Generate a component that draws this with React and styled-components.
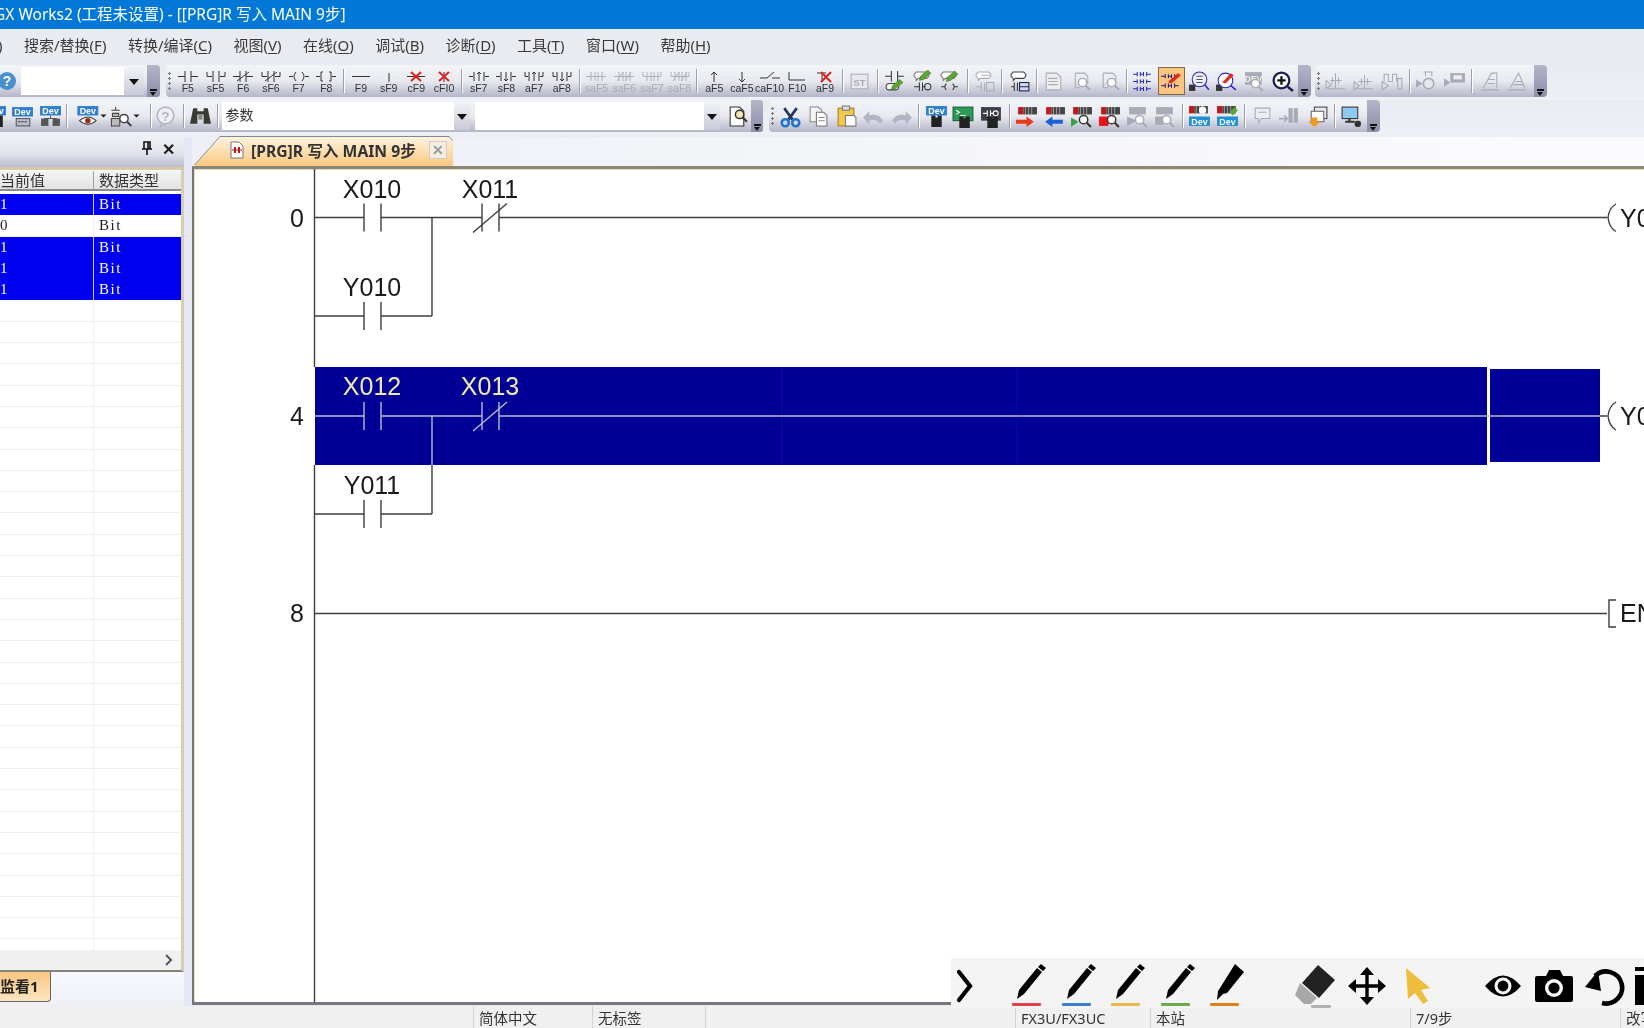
import React from "react"
import styled, { createGlobalStyle, css } from "styled-components"

const GlobalStyle = createGlobalStyle`
  html, body {
    margin: 0;
    padding: 0;
    background: #f0f0f0;
    overflow: hidden;
  }
  * { box-sizing: border-box; }
`

const UI_FONT = `"Noto Sans", "Noto Sans CJK SC", sans-serif`

const Screen = styled.div`
  position: relative;
  width: 1644px;
  height: 1028px;
  overflow: hidden;
  display: flex;
  flex-direction: column;
  font-family: ${UI_FONT};
  background: #eceef4;
  filter: blur(0.3px);
`

const TitleBar = styled.div`
  height: 29px;
  flex: none;
  background: #0078d7;
  color: #fff;
  font-size: 15.5px;
  line-height: 28px;
  white-space: nowrap;
  margin-left: -6px;
`

const MenuBar = styled.div`
  height: 36px;
  flex: none;
  display: flex;
  align-items: center;
  gap: 21.5px;
  margin-left: -2px;
  padding-bottom: 5px;
  background: #e9ebf1;
  color: #3a3a3a;
  font-size: 15px;
  white-space: nowrap;
`

const MenuItem = styled.span`
  u { text-underline-offset: 2px; }
`

const ToolRow = styled.div`
  height: 35px;
  flex: none;
  display: flex;
  align-items: flex-start;
  gap: 4px;
  background: linear-gradient(#e9ebf1, #eff0f5);
`

const ToolBar = styled.div`
  height: 32px;
  display: flex;
  align-items: center;
  flex: none;
  width: ${p => p.$w}px;
  margin-left: ${p => p.$offset ?? 0}px;
  background: linear-gradient(#f3f4f8 0%, #e9eaf0 50%, #b4b5c9 100%);
  border-radius: ${p => (p.$flushLeft ? "0 3px 3px 0" : "4px")};
  overflow: hidden;
`

const ToolEnd = styled.div`
  width: 13px;
  flex: none;
  align-self: stretch;
  margin-left: auto;
  border-radius: 0 3px 3px 0;
  background: linear-gradient(#b4b5c8, #8d8ea8);
  position: relative;
  &::after {
    content: "";
    position: absolute;
    left: 3px;
    bottom: 6px;
    width: 7px;
    height: 2px;
    background: #111;
  }
  &::before {
    content: "";
    position: absolute;
    left: 3px;
    bottom: 1px;
    border: 3.5px solid transparent;
    border-top: 4px solid #111;
    border-bottom: 0;
  }
`

const Grip = styled.div`
  width: 3px;
  height: 20px;
  margin: 0 3px 0 2px;
  flex: none;
  background-image: radial-gradient(circle, #777 1px, transparent 1.2px);
  background-size: 3px 5px;
`

const Sep = styled.div`
  width: 1px;
  height: 24px;
  margin: 0 ${p => p.$r ?? 3}px 0 ${p => p.$l ?? 3}px;
  flex: none;
  background: #9c9db2;
  box-shadow: 1px 0 0 #fff;
`

const ToolBtn = styled.div`
  width: ${p => p.$w ?? 27.7}px;
  height: 28px;
  flex: none;
  margin-left: ${p => p.$ml ?? 0}px;
  display: flex;
  flex-direction: column;
  align-items: center;
  justify-content: center;
  color: #222;
  ${p =>
    p.$active &&
    css`
      background: #fbc580;
      outline: 1px solid #7d6a48;
      outline-offset: -1px;
    `}
`

const KeyLabel = styled.span`
  font: 10.5px/10px "Liberation Sans", sans-serif;
  color: ${p => (p.$dim ? "#a9a9b4" : "#333")};
  white-space: nowrap;
`

const Combo = styled.div`
  position: relative;
  height: 28px;
  width: ${p => p.$w}px;
  margin-left: ${p => p.$ml ?? 0}px;
  flex: none;
  background: #fff;
  color: #333;
  font-size: 14px;
  line-height: 26px;
  padding-left: 4px;
`

const ComboArrow = styled.div`
  position: absolute;
  right: 0;
  top: 0;
  bottom: 0;
  width: ${p => p.$w ?? 16}px;
  background: linear-gradient(#f2f3f6, #c9cad8);
  &::after {
    content: "";
    position: absolute;
    left: calc(50% - 5px);
    top: 12px;
    border: 5px solid transparent;
    border-top: 6px solid #111;
    border-bottom: 0;
  }
`

const Workspace = styled.div`
  flex: 1;
  min-height: 0;
  display: flex;
  margin-top: 2px;
  background: linear-gradient(90deg, #e4e7f4, #eceef6);
`

const SidePanel = styled.div`
  width: 184px;
  flex: none;
  display: flex;
  flex-direction: column;
`

const PanelHead = styled.div`
  height: 30px;
  flex: none;
  display: flex;
  justify-content: flex-end;
  align-items: center;
  gap: 9px;
  padding: 0 9px 5px 0;
  background: linear-gradient(#eff0f5, #e0e1ea 60%, #babbce);
  font: bold 16px/1 "Liberation Sans", sans-serif;
  color: #222;
`

const PanelBody = styled.div`
  flex: 1;
  min-height: 0;
  display: flex;
  flex-direction: column;
  border-top: 3px solid #d8c9a6;
  border-right: 3px solid #d8cdb4;
  border-bottom: 2px solid #85857f;
  background: #fff;
`

const WatchTable = styled.div`
  flex: 1;
  min-height: 0;
  overflow: hidden;
  padding-top: 1px;
`

const WatchHead = styled.div`
  display: grid;
  grid-template-columns: 93px 88px;
  height: 20px;
  margin-bottom: 3px;
  background: linear-gradient(#f4f4f4, #e3e3e3);
  border-bottom: 2px solid #8d8d8d;
  font-size: 15px;
  line-height: 19px;
  color: #333;
  span + span {
    border-left: 1px solid #a0a0a0;
    padding-left: 5px;
  }
`

const WatchRow = styled.div`
  display: grid;
  grid-template-columns: 93px 88px;
  height: 21.3px;
  font: 15px/21px "Liberation Serif", serif;
  letter-spacing: 1.6px;
  color: ${p => (p.$on ? "#fff" : "#222")};
  span {
    background: ${p => (p.$on ? "#0000f0" : "#fff")};
    border-bottom: 1px solid ${p => (p.$on ? "#c8c8f0" : "#efefef")};
  }
  span + span {
    border-left: 1px solid ${p => (p.$on ? "#c8c8f0" : "#efefef")};
    padding-left: 5px;
  }
`

const HScroll = styled.div`
  height: 20px;
  flex: none;
  display: flex;
  align-items: center;
  justify-content: flex-end;
  padding-right: 8px;
  background: #f0f0f0;
`

const SheetTabs = styled.div`
  height: 34px;
  flex: none;
  background: linear-gradient(#f8f9fe, #eef0f6);
`

const SheetTab = styled.div`
  width: 51px;
  height: 30px;
  padding-right: 13px;
  text-align: right;
  font-size: 15px;
  font-weight: 700;
  line-height: 28px;
  color: #222;
  background: linear-gradient(#fcc581, #fde6c2);
  border-right: 1px solid #666;
  border-bottom: 1px solid #666;
  border-radius: 0 0 4px 0;
  white-space: nowrap;
  overflow: hidden;
`

const EditorArea = styled.div`
  flex: 1;
  min-width: 0;
  display: flex;
  flex-direction: column;
  padding-left: 8px;
  padding-bottom: 1px;
`

const TabStrip = styled.div`
  height: 29px;
  flex: none;
  padding-left: 2px;
  display: flex;
  align-items: flex-end;
  background: linear-gradient(90deg, #eef0f6, #fbfbfd);
`

const DocTabOutline = styled.div`
  filter: drop-shadow(0 -1px 0 #7f8798);
`

const DocTab = styled.div`
  width: 259px;
  height: 29px;
  display: flex;
  align-items: center;
  padding: 0 0 3px 35px;
  gap: 6px;
  font-size: 15.7px;
  font-weight: 700;
  color: #333;
  white-space: nowrap;
  background: linear-gradient(#fdf3df, #fbc880);
  clip-path: polygon(0 100%, 26px 0, calc(100% - 4px) 0, 100% 4px, 100% 100%);
`

const TabClose = styled.div`
  width: 18px;
  height: 18px;
  margin-left: auto;
  margin-right: 6px;
  background: #f3eee4;
  border: 1px solid #d2cdc2;
  color: #9a9a9a;
  font: bold 14px/16px "Liberation Sans", sans-serif;
  text-align: center;
`

const EditorFrame = styled.div`
  flex: 1;
  min-height: 0;
  background: #fff;
  overflow: hidden;
  border-top: 3px solid #8b8778;
  border-left: 2px solid #77756e;
  box-shadow: inset 1px 1px 0 #e8dcc2;
  border-bottom: 3px solid #77787e;
`

const Ladder = styled.svg`
  display: block;
`

const LadderText = styled.text`
  font-family: "Liberation Sans", sans-serif;
  font-size: ${p => p.$size ?? 25}px;
  text-anchor: ${p => p.$anchor ?? "middle"};
  fill: ${p => (p.$sel ? "#efe9ad" : "#1a1a1a")};
`

const StatusBar = styled.div`
  height: 22px;
  flex: none;
  display: flex;
  background: #f0f0f0;
  color: #333;
  font-size: 14.5px;
  line-height: 24px;
  white-space: nowrap;
`

const StatusCell = styled.div`
  width: ${p => p.$w}px;
  flex: none;
  padding-left: 5px;
  border-left: ${p => (p.$first ? "none" : "1px solid #d2d2d2")};
`

const PenDock = styled.div`
  position: absolute;
  left: 951px;
  top: 958px;
  width: 693px;
  height: 50px;
  padding-top: 6px;
  display: flex;
  align-items: center;
  background: #f4f4f4;
`

const DockSlot = styled.div`
  width: ${p => p.$w}px;
  flex: none;
  display: flex;
  justify-content: center;
  margin-right: ${p => p.$mr ?? 0}px;
`

// ---------- toolbar glyphs ----------

const K = ({ d, red, dim, label }) => (
  <ToolBtn>
    <svg width="24" height="13" viewBox="0 0 24 13" fill="none" stroke={dim ? "#b0b0ba" : "#333"} strokeWidth="1">
      <path d={d} />
      {red && <path d={red} stroke="#e02020" strokeWidth="2" />}
    </svg>
    <KeyLabel $dim={dim}>{label}</KeyLabel>
  </ToolBtn>
)

const G = ({ active, ml, children }) => (
  <ToolBtn $active={active} $ml={ml}>
    <svg width="23" height="23" viewBox="0 0 22 22" fill="none">
      {children}
    </svg>
  </ToolBtn>
)

const Mag = ({ x = 12, y = 12, c = "#666", f = "#fff" }) => (
  <g stroke={c}>
    <circle cx={x} cy={y} r="4" fill={f} strokeWidth="1.4" />
    <path d={`M${x + 3} ${y + 3}l4 4`} strokeWidth="2" />
  </g>
)
const Pen = ({ x = 12, y = 8 }) => (
  <path d={`M${x} ${y + 6}l7-6 3 3-7 6-4 1z`} fill="#5aa832" stroke="#386b1c" strokeWidth=".5" />
)
const Bubble = ({ x = 6, y = 2, c = "#777" }) => (
  <path d={`M${x} ${y}h10l2 2v2l-2 2h-8l-2 2v-2l-2-2v-2z`} fill="#fff" stroke={c} />
)
const DevTag = ({ x = 1, y = 1, c = "#2f7fd0" }) => (
  <g>
    <rect x={x} y={y} width="20" height="9" fill={c} />
    <text x={x + 10} y={y + 8} fontSize="8.5" fontWeight="700" fontFamily="Liberation Sans" fill="#fff" textAnchor="middle">Dev</text>
  </g>
)
const Binocular = ({ x = 8, y = 10 }) => (
  <path d={`M${x} ${y}h4v2h2v-2h4v11h-5v-4h-0v4h-5z`} fill="#222" />
)
const Blocks = ({ x = 1, y = 3, c = "#444" }) => (
  <g>
    <rect x={x} y={y} width="5" height="7" fill="#c01818" />
    <rect x={x + 5} y={y} width="13" height="7" fill={c} />
    <path d={`M${x + 7} ${y}v7M${x + 10} ${y}v7M${x + 13} ${y}v7`} stroke="#bbb" strokeWidth=".7" />
  </g>
)

const CONTACT = "M2 6.5h7M9 1v11M15 1v11M15 6.5h7"

const MAIN_KEYS = [
  { label: "F5", d: CONTACT },
  { label: "sF5", d: "M3 2v4.5h5M9 1v11M15 1v11M16 6.5h5V2" },
  { label: "F6", d: CONTACT + "M6 11L18 2" },
  { label: "sF6", d: "M3 2v4.5h5M9 1v11M15 1v11M16 6.5h5V2M6 11L18 2" },
  { label: "F7", d: "M2 6.5h4M9 2Q5 6.5 9 11M15 2Q19 6.5 15 11M18 6.5h4" },
  { label: "F8", d: "M2 6.5h4M9 2H7v9h2M15 2h2v9h-2M18 6.5h4" },
]
const LINE_KEYS = [
  { label: "F9", d: "M3 6.5h18" },
  { label: "sF9", d: "M12 3v9" },
  { label: "cF9", d: "M3 6.5h18", red: "M7 2l10 9M17 2L7 11" },
  { label: "cFI0", d: "M12 2v10", red: "M7 2l10 9M17 2L7 11" },
]
const PULSE_KEYS = [
  { label: "sF7", d: "M2 6.5h4M7 2v9M17 2v9M18 6.5h4M12 11V2M10 4l2-2 2 2" },
  { label: "sF8", d: "M2 6.5h4M7 2v9M17 2v9M18 6.5h4M12 11V2M10 9l2 2 2-2" },
  { label: "aF7", d: "M3 2v4.5h3M7 2v9M17 2v9M18 6.5h3V2M12 11V2M10 4l2-2 2 2" },
  { label: "aF8", d: "M3 2v4.5h3M7 2v9M17 2v9M18 6.5h3V2M12 11V2M10 9l2 2 2-2" },
]
const DIM_KEYS = [
  { label: "saF5", d: "M2 6.5h20M7 2v9M11 2v9M14 2v9M18 2v9", dim: true },
  { label: "saF6", d: "M2 6.5h20M7 2v9M11 2v9M14 2v9M18 2v9M5 11l6-9M13 11l6-9", dim: true },
  { label: "saF7", d: "M3 2v4.5h18V2M7 2v9M11 2v9M14 2v9M18 2v9", dim: true },
  { label: "saF8", d: "M3 2v4.5h18V2M7 2v9M11 2v9M14 2v9M18 2v9M5 11l6-9M13 11l6-9", dim: true },
]
const WIRE_KEYS = [
  { label: "aF5", d: "M12 12V2M9 5l3-3 3 3" },
  { label: "caF5", d: "M12 12V2M9 9l3 3 3-3" },
  { label: "caF10", d: "M2 8h7l7-6M14 8h8" },
  { label: "F10", d: "M4 2v8h16" },
  { label: "aF9", d: "M4 3h9M9 3v9", red: "M8 2l10 10M18 2L8 12" },
]

const D = "#a9aab6"

const Row1Toolbar = () => (
  <ToolBar $offset={2} $w={1145}>
    <Grip />
    {MAIN_KEYS.map(k => <K key={k.label} {...k} />)}
    <Sep />
    {LINE_KEYS.map(k => <K key={k.label} {...k} />)}
    <Sep />
    {PULSE_KEYS.map(k => <K key={k.label} {...k} />)}
    <Sep />
    {DIM_KEYS.map(k => <K key={k.label} {...k} />)}
    <Sep />
    {WIRE_KEYS.map(k => <K key={k.label} {...k} />)}
    <Sep />
    <G>
      <rect x="3" y="4" width="16" height="14" stroke={D} fill="#e8e8ee" />
      <text x="11" y="15" fontSize="9" fontWeight="700" fontFamily="Liberation Sans" fill={D} textAnchor="middle">ST</text>
    </G>
    <Sep />
    <G>
      <path d="M2 6h6M8 1v10M14 1v10M14 6h6" stroke="#333" />
      <rect x="3" y="13" width="12" height="6" rx="3" fill="#fff" stroke="#444" />
      <Pen x={9} y={9} />
    </G>
    <G>
      <Bubble x={5} y={2} />
      <Pen x={9} y={0} />
      <path d="M3 16h5M8 12v8M11 12v8M11 16h3" stroke="#333" />
      <circle cx="16" cy="16" r="3" stroke="#333" />
    </G>
    <G>
      <Bubble x={5} y={2} />
      <Pen x={9} y={1} />
      <path d="M3 16h3M8 13Q5 16 8 19M14 13Q17 16 14 19M16 16h3" stroke="#333" />
    </G>
    <Sep />
    <G>
      <Bubble x={5} y={2} c={D} />
      <path d="M8 5h8M3 16h5M8 12v8M11 12v8M13 12h7v8h-7z" stroke={D} />
    </G>
    <Sep />
    <G>
      <Bubble x={5} y={2} c="#444" />
      <path d="M3 16h3M6 12v8M9 12v8" stroke="#333" />
      <rect x="11" y="12" width="9" height="8" fill="#cfd6f0" stroke="#224" />
      <path d="M11 16h9" stroke="#224" />
    </G>
    <Sep />
    <G>
      <path d="M4 3h10l4 4v12H4z" fill="#eee" stroke={D} />
      <path d="M6 8h9M6 11h9M6 14h9" stroke={D} />
    </G>
    <G>
      <path d="M5 3h9l3 3v7M5 3v14h5" stroke={D} />
      <Mag x={12} y={12} c={D} />
    </G>
    <G>
      <path d="M5 3h9l3 3v7M5 3v14h5" stroke={D} />
      <Mag x={13} y={12} c={D} />
    </G>
    <Sep />
    <G>
      <path d="M1 4h4M8 4h3M14 4h4M5 2v4M8 2v4M11 2v4M14 2v4M1 11h4M8 11h3M14 11h4M5 9v4M8 9v4M11 9v4M14 9v4M1 18h4M8 18h3M14 18h4M5 16v4M8 16v4M11 16v4M14 16v4" stroke="#2a2ac0" />
    </G>
    <G active>
      <path d="M1 6h4M8 6h3M14 6h4M5 4v4M8 4v4M11 4v4M14 4v4M1 15h4M8 15h3M14 15h4M5 13v4M8 13v4M11 13v4M14 13v4" stroke="#1a1a80" />
      <path d="M9 10l8-7 3 2-8 7-4 1z" fill="#e02a20" />
    </G>
    <G>
      <rect x="1" y="14" width="6" height="6" fill="#333" />
      <circle cx="11" cy="9" r="7" fill="#eef" stroke="#2a2ac0" />
      <path d="M8 6h6M8 9h6M8 12h6" stroke="#555" />
      <path d="M16 14l4 5" stroke="#2a2ac0" strokeWidth="1.5" />
    </G>
    <G>
      <rect x="1" y="14" width="6" height="6" fill="#333" />
      <circle cx="10" cy="10" r="7" fill="#fff" stroke="#2a2ac0" />
      <path d="M7 12l8-9 3 2-8 8z" fill="#e02a20" />
      <path d="M15 15l5 4" stroke="#2a2ac0" strokeWidth="1.5" />
    </G>
    <G>
      <rect x="2" y="2" width="16" height="12" fill={D} />
      <text x="10" y="11" fontSize="8" fontWeight="700" fontFamily="Liberation Sans" fill="#eee" textAnchor="middle">DEV</text>
      <Mag x={12} y={13} c={D} />
    </G>
    <G>
      <circle cx="10" cy="10" r="7.5" fill="#fff" stroke="#1a2050" strokeWidth="2.2" />
      <path d="M6 10h8" stroke="#111" strokeWidth="2.2" />
      <path d="M10 6v8" stroke="#111" strokeWidth="2.2" />
      <path d="M16 16l5 4" stroke="#1a2050" strokeWidth="2.4" />
    </G>
    <ToolEnd />
  </ToolBar>
)

const Row1Extra = () => (
  <ToolBar $w={232}>
    <Grip />
    <G>
      <path d="M3 18h16M10 3v15M5 10h11M7 7v6M13 7v6M1 10l5 4-5 4z" stroke={D} fill="none" />
    </G>
    <G>
      <path d="M3 18h16M11 5v13M5 11h13M8 8v6M14 8v6M1 11l5 4-5 4z" stroke={D} />
    </G>
    <G>
      <path d="M3 11V4h4v7h4V4h4v7M16 8h4v10h-4zM1 11l6 4-6 4z" stroke={D} />
    </G>
    <Sep />
    <G>
      <path d="M8 2h9M10 2v4M16 2v4" stroke={D} />
      <circle cx="13" cy="13" r="5" stroke={D} strokeWidth="1.5" fill="#e6e6ee" />
      <path d="M1 9l6 4-6 4z" fill={D} />
    </G>
    <G>
      <rect x="7" y="3" width="14" height="9" fill={D} />
      <rect x="10" y="5" width="8" height="4" fill="#eee" />
      <path d="M1 8l6 4-6 4z" fill={D} />
    </G>
    <Sep />
    <G>
      <path d="M3 19h17M5 17l8-14h5v14M9 9h7M9 13h7" stroke={D} />
    </G>
    <G>
      <path d="M3 19h17M5 17l8-14 6 14M10 11l6 0M8 14h9" stroke={D} />
    </G>
    <ToolEnd />
  </ToolBar>
)

const Row2LeftTools = () => (
  <>
    <G ml={-18.6}><DevTag x={1} y={1} /><Binocular x={8} y={10} /></G>
    <G>
      <DevTag x={1} y={2} />
      <rect x="5" y="13" width="13" height="7" fill="#bcbcc8" stroke="#555" />
      <path d="M7 16h2M10 16h2M13 16h2" stroke="#224" />
    </G>
    <G>
      <DevTag x={1} y={1} />
      <path d="M11 10v3M5 13h12" stroke="#555" />
      <rect x="2" y="13" width="7" height="7" fill="#555" />
      <rect x="13" y="13" width="7" height="7" fill="#555" />
    </G>
    <Sep $l={1.5} $r={8} />
    <ToolBtn $w={33.5}>
      <svg width="32" height="23" viewBox="0 0 30 22" fill="none">
        <DevTag x={1} y={1} />
        <path d="M3 15q8-7 16 0-8 7-16 0z" fill="#fff" stroke="#444" />
        <circle cx="11" cy="15" r="2.6" fill="#a02818" />
        <path d="M23 9h6l-3 3z" fill="#222" />
      </svg>
    </ToolBtn>
    <ToolBtn $w={33.5}>
      <svg width="32" height="23" viewBox="0 0 30 22" fill="none">
        <path d="M6 2v3M2 5h8M3 8h6v3H3zM2 13h8v7H2z" stroke="#444" fill="#bbb" />
        <Mag x={14} y={13} c="#444" />
        <path d="M23 9h6l-3 3z" fill="#222" />
      </svg>
    </ToolBtn>
    <Sep $l={8.5} $r={0} />
    <G>
      <circle cx="11" cy="10" r="8" stroke="#b5b5c0" fill="#f0f0f4" strokeWidth="1.5" />
      <text x="11" y="15" fontSize="13" fontWeight="700" fontFamily="Liberation Sans" fill="#b5b5c0" textAnchor="middle">?</text>
      <path d="M7 17l-1 4 5-3" stroke="#b5b5c0" />
    </G>
    <Sep $l={3.7} $r={3} />
    <G>
      <path d="M4 3h4v3h6V3h4l3 15h-7V9h-6v9H1z" fill="#3a3a34" />
      <rect x="9" y="9" width="4" height="5" fill="#888" />
    </G>
    <Sep $l={2} $r={0} />
  </>
)

const DocFind = () => (
  <ToolBtn $ml={4}>
    <svg width="23" height="23" viewBox="0 0 22 22" fill="none">
      <path d="M4 2h9l4 4v14H4z" fill="#fff" stroke="#333" />
      <Mag x={13} y={9} c="#333" f="#fbe8b8" />
    </svg>
  </ToolBtn>
)

const Row2Toolbar = () => (
  <ToolBar $offset={2} $w={611}>
    <Grip />
    <G>
      <path d="M5 3l8 11M17 3L9 14" stroke="#26365c" strokeWidth="2.5" />
      <circle cx="6" cy="17" r="3.4" stroke="#1f74c8" strokeWidth="2.4" />
      <circle cx="16" cy="17" r="3.4" stroke="#1f74c8" strokeWidth="2.4" />
    </G>
    <G>
      <path d="M3 2h8l3 3v11H3z" fill="#f4f4f4" stroke="#888" />
      <path d="M9 7h7l3 3v10H9z" fill="#fff" stroke="#777" />
      <path d="M11 12h6M11 15h6" stroke="#888" />
    </G>
    <G>
      <rect x="3" y="3" width="15" height="17" fill="#f3c94e" stroke="#a87c18" />
      <rect x="7" y="1" width="7" height="4" fill="#ddd" stroke="#777" />
      <path d="M10 10h8l2 2v8H10z" fill="#fff" stroke="#777" />
    </G>
    <G>
      <path d="M1 12l6-6v4q8-3 13 5l-3 3q-3-5-10-3v4z" fill="#b3b5c4" />
    </G>
    <G>
      <path d="M21 12l-6-6v4q-8-3-13 5l3 3q3-5 10-3v4z" fill="#b3b5c4" />
    </G>
    <Sep />
    <G><DevTag x={1} y={1} /><Binocular x={6} y={10} /></G>
    <G>
      <rect x="1" y="2" width="19" height="13" fill="#2d9a58" stroke="#1a6038" />
      <path d="M4 5l3 2-3 2M8 10h5" stroke="#fff" />
      <Binocular x={7} y={11} />
    </G>
    <G>
      <rect x="1" y="2" width="19" height="13" fill="#3e3e46" />
      <path d="M3 8h4M7 5v6M10 5v6M10 8h3" stroke="#fff" />
      <circle cx="15" cy="8" r="2.4" stroke="#fff" />
      <Binocular x={7} y={11} />
    </G>
    <Sep />
    <G>
      <Blocks x={3} y={2} />
      <path d="M1 14h10v-3l7 5-7 5v-3H1z" fill="#ea3a18" />
    </G>
    <G>
      <Blocks x={3} y={2} />
      <path d="M19 14H9v-3l-7 5 7 5v-3h10z" fill="#1a62d8" />
    </G>
    <G>
      <Blocks x={3} y={2} />
      <path d="M1 12l7 4-7 5z" fill="#38a040" />
      <Mag x={13} y={14} c="#333" />
    </G>
    <G>
      <Blocks x={3} y={2} />
      <rect x="1" y="11" width="9" height="9" fill="#ef1414" />
      <Mag x={13} y={14} c="#333" />
    </G>
    <G>
      <rect x="3" y="2" width="16" height="7" fill={D} />
      <path d="M1 11l9 4-9 5z" fill={D} />
      <Mag x={13} y={14} c={D} />
    </G>
    <G>
      <rect x="3" y="2" width="16" height="7" fill={D} />
      <rect x="2" y="11" width="8" height="8" fill={D} />
      <Mag x={13} y={14} c={D} />
    </G>
    <Sep />
    <G>
      <Blocks x={1} y={1} />
      <circle cx="14" cy="5" r="3.5" fill="#fff" />
      <DevTag x={1} y={11} c="#1f8fd8" />
    </G>
    <G>
      <Blocks x={1} y={1} />
      <path d="M13 7l5-5 3 3-5 5z" fill="#5aa832" />
      <DevTag x={1} y={11} c="#1f8fd8" />
    </G>
    <Sep />
    <G>
      <path d="M5 3h14v10h-8l-3 4v-4H5z" fill="#eceef2" stroke={D} />
      <path d="M8 7h8" stroke={D} />
    </G>
    <G>
      <path d="M1 13h8M6 10l3 3-3 3" stroke={D} strokeWidth="1.5" />
      <rect x="10" y="3" width="4" height="14" fill={D} />
      <rect x="15" y="3" width="4" height="14" fill={D} />
    </G>
    <G>
      <rect x="8" y="2" width="12" height="11" fill="#e8eaf2" stroke="#444" />
      <rect x="5" y="6" width="12" height="10" fill="#fff" stroke="#666" />
      <path d="M5 12h6v4h3l-6 5-6-5h3z" fill="#f29a1c" />
    </G>
    <Sep />
    <G>
      <rect x="2" y="2" width="15" height="11" fill="#8ec9f2" stroke="#333" />
      <path d="M5 16h9M9 13v3" stroke="#333" strokeWidth="2" />
      <rect x="14" y="15" width="6" height="6" rx="2" fill="#333" />
    </G>
    <ToolEnd />
  </ToolBar>
)

// ---------- ladder ----------

const Contact = ({ x, y, nc, stroke }) => (
  <g stroke={stroke}>
    <path d={`M${x} ${y - 14}v28M${x + 17} ${y - 14}v28`} />
    {nc && <path d={`M${x - 9} ${y + 15}L${x + 25} ${y - 14}`} />}
  </g>
)

const WATCH = ["1", "0", "1", "1", "1"]

const LadderChart = () => {
  const ink = "#3e3e3e"
  const light = "#b9b9cc"
  return (
    <Ladder width="1450" height="840" viewBox="194 169 1450 840">
      {/* selected rung */}
      <rect x="315" y="367" width="1172" height="98" fill="#000096" />
      <rect x="1490" y="369" width="110" height="93" fill="#000096" />
      <path d="M782 367v98M1017 367v98" stroke="#0a0aa8" />

      <g fill="none" stroke={ink} strokeWidth="1.4">
        <path d="M314.5 168v199M314.5 465v543" />
        {/* rung 0 */}
        <path d="M315 217.5h49M381 217.5h101M499 217.5H1607M432 217.5V316M315 316h49M381 316h51" />
        <Contact x={364} y={217.5} />
        <Contact x={364} y={316} />
        <Contact x={482} y={217.5} nc />
        <path d="M1616 204q-7 4-8 13.5q1 10 8 14" />
        {/* rung 4 lower branch */}
        <path d="M432 465v49M315 514h49M381 514h51" />
        <Contact x={364} y={514} />
        <path d="M1600 416h7M1616 402q-7 4-8 14q1 10 8 14" />
        {/* rung 8 */}
        <path d="M315 613.5H1607M1616 600h-7v27h7" />
      </g>

      <g fill="none" stroke={light} strokeWidth="1.4">
        <path d="M315 416h49M381 416h101M499 416H1600M432 416v49" />
        <Contact x={364} y={416} stroke={light} />
        <Contact x={482} y={416} nc stroke={light} />
      </g>

      <LadderText x="372" y="198">X010</LadderText>
      <LadderText x="490" y="198">X011</LadderText>
      <LadderText x="372" y="296">Y010</LadderText>
      <LadderText x="372" y="395" $sel>X012</LadderText>
      <LadderText x="490" y="395" $sel>X013</LadderText>
      <LadderText x="372" y="494">Y011</LadderText>

      <LadderText x="297" y="227">0</LadderText>
      <LadderText x="297" y="425">4</LadderText>
      <LadderText x="297" y="622">8</LadderText>

      <LadderText x="1620" y="227" $anchor="start">Y010</LadderText>
      <LadderText x="1620" y="425" $anchor="start">Y011</LadderText>
      <LadderText x="1620" y="622" $anchor="start">END</LadderText>
    </Ladder>
  )
}

// ---------- pen dock ----------

const PenIcon = ({ color, fat }) => (
  <svg width="42" height="48" viewBox="0 0 42 48">
    {fat ? (
      <path d="M29 2l9 8-17 21-4 1-6 6 1-9 2-3z" fill="#000" />
    ) : (
      <path d="M33 2l5 4-3 3-5-4zM29 6l5 4-18 22-7 5 2-9z" fill="#000" />
    )}
    <rect x="4" y="41" width="29" height="3" rx="1" fill={color} />
  </svg>
)

const MoveIcon = () => (
  <svg width="40" height="40" viewBox="0 0 40 40">
    <path d="M20 5v30M5 20h30" stroke="#000" strokeWidth="3.4" fill="none" />
    <path d="M20 1l7 8h-14zM20 39l7-8h-14zM1 20l8-7v14zM39 20l-8-7v14z" fill="#000" />
  </svg>
)

const CursorIcon = () => (
  <svg width="32" height="38" viewBox="0 0 32 38">
    <path d="M4 1l24 20-9 2 7 11-5 3-8-11-7 6z" fill="#efbd3c" />
  </svg>
)

const EyeIcon = () => (
  <svg width="38" height="28" viewBox="0 0 38 28">
    <path d="M1 14Q19-7 37 14 19 35 1 14z" fill="#000" />
    <circle cx="19" cy="14" r="8.5" fill="#f4f4f4" />
    <circle cx="19" cy="14" r="5.4" fill="#000" />
  </svg>
)

const CameraIcon = () => (
  <svg width="40" height="36" viewBox="0 0 40 36">
    <path d="M3 8h9l3-6h11l3 6h8a2 2 0 012 2v22a2 2 0 01-2 2H3a2 2 0 01-2-2V10a2 2 0 012-2z" fill="#000" />
    <circle cx="20" cy="20" r="9" fill="#f4f4f4" />
    <circle cx="20" cy="20" r="5.6" fill="#000" />
  </svg>
)

const UndoIcon = () => (
  <svg width="44" height="42" viewBox="0 0 44 42" fill="none">
    <path d="M19 38A16 16 0 1 0 12 11" stroke="#000" strokeWidth="4.6" />
    <path d="M2 22L15 6l3 20z" fill="#000" />
  </svg>
)

const EraserIcon = () => (
  <svg width="46" height="48" viewBox="0 0 46 48">
    <path d="M24 3l17 15-16 18-17-15z" fill="#222" />
    <path d="M6 21l17 15-6 6-7 0-9-9z" fill="#a8a8a8" />
    <rect x="17" y="43" width="20" height="3" rx="1" fill="#b0b0b0" />
  </svg>
)

const TrashIcon = () => (
  <svg width="12" height="38" viewBox="0 0 12 38">
    <rect x="2" y="0" width="10" height="4" fill="#000" />
    <rect x="2" y="8" width="10" height="30" fill="#000" />
  </svg>
)

const ChevronIcon = () => (
  <svg width="18" height="34" viewBox="0 0 18 34" fill="none" stroke="#000" strokeWidth="4.2" strokeLinecap="round">
    <path d="M3 3l11 14L3 31" />
  </svg>
)

export default function App() {
  return (
    <>
      <GlobalStyle />
      <Screen>
        <TitleBar>GX Works2 (工程未设置) - [[PRG]R 写入 MAIN 9步]</TitleBar>

        <MenuBar>
          <MenuItem>)</MenuItem>
          <MenuItem>搜索/替换(<u>F</u>)</MenuItem>
          <MenuItem>转换/编译(<u>C</u>)</MenuItem>
          <MenuItem>视图(<u>V</u>)</MenuItem>
          <MenuItem>在线(<u>O</u>)</MenuItem>
          <MenuItem>调试(<u>B</u>)</MenuItem>
          <MenuItem>诊断(<u>D</u>)</MenuItem>
          <MenuItem>工具(<u>T</u>)</MenuItem>
          <MenuItem>窗口(<u>W</u>)</MenuItem>
          <MenuItem>帮助(<u>H</u>)</MenuItem>
        </MenuBar>

        <ToolRow>
          <ToolBar $flushLeft $w={160}>
            <svg width="21" height="22" viewBox="0 0 21 22">
              <circle cx="7" cy="11" r="9" fill="#4a8fd0" />
              <text x="7" y="16" fontSize="14" fontWeight="700" fontFamily="Liberation Sans" fill="#fff" textAnchor="middle">?</text>
            </svg>
            <Combo $w={123}><ComboArrow $w={20} /></Combo>
            <ToolEnd />
          </ToolBar>
          <Row1Toolbar />
          <Row1Extra />
        </ToolRow>

        <ToolRow>
          <ToolBar $flushLeft $w={763}>
            <Row2LeftTools />
            <Combo $w={248} $ml={4}>参数<ComboArrow /></Combo>
            <Combo $w={245} $ml={5}><ComboArrow /></Combo>
            <DocFind />
            <ToolEnd />
          </ToolBar>
          <Row2Toolbar />
        </ToolRow>

        <Workspace>
          <SidePanel>
            <PanelHead>
              <span>
                <svg width="12" height="14" viewBox="0 0 12 14" fill="none" stroke="#111" strokeWidth="1.6">
                  <path d="M3 1h6v7H3zM1 8h10M6 8v6M7 1v7" />
                </svg>
              </span>
              <span>✕</span>
            </PanelHead>
            <PanelBody>
              <WatchTable>
                <WatchHead>
                  <span>当前值</span>
                  <span>数据类型</span>
                </WatchHead>
                {WATCH.map((v, i) => (
                  <WatchRow key={i} $on={v === "1"}>
                    <span>{v}</span>
                    <span>Bit</span>
                  </WatchRow>
                ))}
                {Array.from({ length: 31 }).map((_, i) => (
                  <WatchRow key={i}>
                    <span />
                    <span />
                  </WatchRow>
                ))}
              </WatchTable>
              <HScroll>
                <svg width="9" height="12" viewBox="0 0 9 12" fill="none" stroke="#555" strokeWidth="2">
                  <path d="M2 1l5 5-5 5" />
                </svg>
              </HScroll>
            </PanelBody>
            <SheetTabs>
              <SheetTab>监看1</SheetTab>
            </SheetTabs>
          </SidePanel>

          <EditorArea>
            <TabStrip>
              <DocTabOutline>
                <DocTab>
                  <svg width="16" height="18" viewBox="0 0 16 18">
                    <path d="M2 1h8l4 4v12H2z" fill="#fff" stroke="#777" />
                    <path d="M3 9h10" stroke="#c01818" />
                    <path d="M6 6v6M10 6v6" stroke="#c01818" strokeWidth="2" />
                  </svg>
                  <span>[PRG]R 写入 MAIN 9步</span>
                  <TabClose>✕</TabClose>
                </DocTab>
              </DocTabOutline>
            </TabStrip>
            <EditorFrame>
              <LadderChart />
            </EditorFrame>
          </EditorArea>
        </Workspace>

        <StatusBar>
          <StatusCell $first $w={473} />
          <StatusCell $w={119}>简体中文</StatusCell>
          <StatusCell $w={113}>无标签</StatusCell>
          <StatusCell $w={310} />
          <StatusCell $w={135}>FX3U/FX3UC</StatusCell>
          <StatusCell $w={260}>本站</StatusCell>
          <StatusCell $w={210}>7/9步</StatusCell>
          <StatusCell $w={24}>改写</StatusCell>
        </StatusBar>

        <PenDock>
          <DockSlot $w={28}><ChevronIcon /></DockSlot>
          <DockSlot $w={25.5} />
          <DockSlot $w={49.5}><PenIcon color="#e0404a" /></DockSlot>
          <DockSlot $w={49.5}><PenIcon color="#3a7fd0" /></DockSlot>
          <DockSlot $w={49.5}><PenIcon color="#eab84a" /></DockSlot>
          <DockSlot $w={49.5}><PenIcon color="#6aaa4a" /></DockSlot>
          <DockSlot $w={49.5} $mr={40}><PenIcon color="#e08018" fat /></DockSlot>
          <DockSlot $w={50}><EraserIcon /></DockSlot>
          <DockSlot $w={50}><MoveIcon /></DockSlot>
          <DockSlot $w={52} $mr={34}><CursorIcon /></DockSlot>
          <DockSlot $w={50}><EyeIcon /></DockSlot>
          <DockSlot $w={51}><CameraIcon /></DockSlot>
          <DockSlot $w={51} $mr={3}><UndoIcon /></DockSlot>
          <DockSlot $w={12}><TrashIcon /></DockSlot>
        </PenDock>
      </Screen>
    </>
  )
}
